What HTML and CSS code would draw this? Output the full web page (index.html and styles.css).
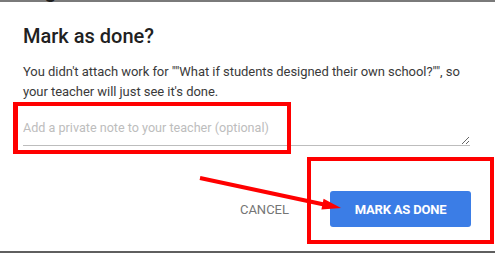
FILE: index.html
```html
<!DOCTYPE html>
<html>
<head>
<meta charset="utf-8">
<link rel="stylesheet" href="styles.css">
</head>
<body>
<div class="page">
  <div class="topbar"><span class="topbar-text">designed their own school?</span></div>
  <div class="dialog">
    <h1 class="title">Mark as done?</h1>
    <p class="message">You didn't attach work for ""What if students designed their own school?"", so your teacher will just see it's done.</p>
    <textarea class="note" placeholder="Add a private note to your teacher (optional)"></textarea>
    <div class="actions">
      <button class="btn btn-cancel">Cancel</button>
      <button class="btn btn-primary">Mark as done</button>
    </div>
  </div>
  <div class="bottombar"></div>

  <div class="mark mark-note"></div>
  <div class="mark mark-button"></div>
  <svg class="arrow" width="495" height="253" viewBox="0 0 495 253">
    <line x1="200" y1="178" x2="324" y2="204.5" stroke="#ff0000" stroke-width="4"/>
    <polygon points="341,208 321.4,209.6 323.6,198.8" fill="#ff0000"/>
  </svg>
</div>
</body>
</html>
```

FILE: styles.css
```css
* { box-sizing: border-box; }
html, body {
  margin: 0;
  padding: 0;
  background: #ffffff;
}
body {
  font-family: Roboto, "Liberation Sans", Arial, sans-serif;
  width: 495px;
  height: 253px;
  overflow: hidden;
}
.page {
  position: relative;
  width: 495px;
  height: 253px;
  display: flex;
  flex-direction: column;
}
.topbar {
  height: 2px;
  background: #7a7a7a;
  overflow: hidden;
  padding-left: 7px;
  flex: none;
}
.topbar-text {
  display: block;
  margin-top: -20px;
  font-size: 20px;
  line-height: 22px;
  font-weight: 700;
  color: #1e1e1e;
  white-space: nowrap;
}
.dialog {
  flex: 1;
  padding: 22px 25px 0 23px;
}
.title {
  margin: 0;
  font-size: 20px;
  line-height: 24px;
  font-weight: 500;
  color: #212121;
}
.message {
  margin: 14px 0 0;
  font-size: 13px;
  line-height: 20px;
  letter-spacing: -0.05px;
  color: #3a3a3a;
}
.note {
  display: block;
  width: 447px;
  height: 28px;
  margin: 16px 0 0;
  padding: 0 0 7px;
  border: none;
  border-bottom: 1px solid #bdbdbd;
  font-family: Roboto, "Liberation Sans", Arial, sans-serif;
  font-size: 12.6px;
  line-height: 20px;
  color: #212121;
  outline: none;
  background: transparent;
}
.note::placeholder {
  color: #bdbdbd;
}
.actions {
  display: flex;
  justify-content: flex-end;
  align-items: center;
  margin-top: 45px;
  margin-right: -1px;
  gap: 41px;
}
.btn {
  font-family: Roboto, "Liberation Sans", Arial, sans-serif;
  font-size: 13px;
  text-transform: uppercase;
  height: 36px;
  border: none;
  border-radius: 3px;
  cursor: pointer;
}
.btn-cancel {
  background: transparent;
  color: #757575;
  font-weight: 400;
  padding: 0;
}
.btn-primary {
  width: 141px;
  background: #3b7de6;
  color: #ffffff;
  font-weight: 700;
  letter-spacing: -0.2px;
  padding: 0 12px;
}
.bottombar {
  height: 2px;
  background: #5f5f5f;
  flex: none;
}
.mark {
  position: absolute;
  border: 4px solid #ff0000;
}
.mark-note {
  left: 13px;
  top: 102px;
  width: 278px;
  height: 52px;
  border-left-width: 5px;
}
.mark-button {
  left: 307px;
  top: 157px;
  width: 187px;
  height: 87px;
}
.arrow {
  position: absolute;
  left: 0;
  top: 0;
}
```
